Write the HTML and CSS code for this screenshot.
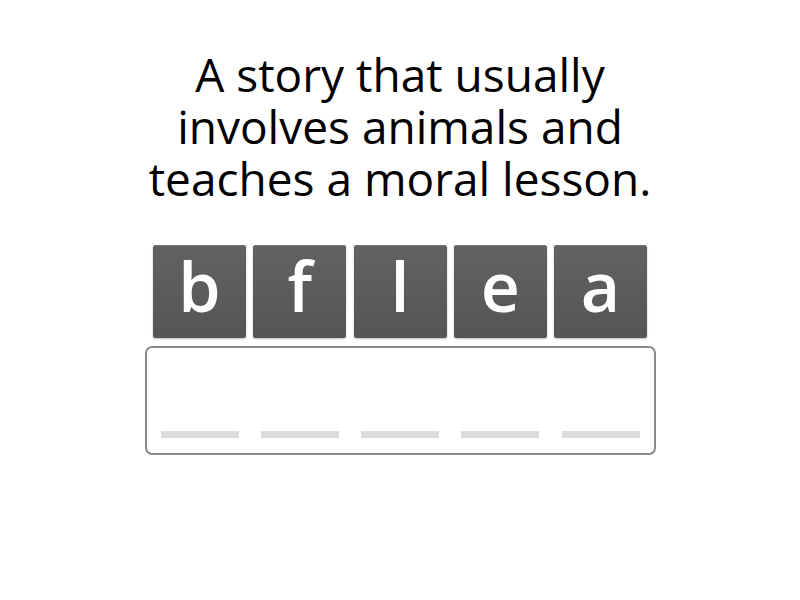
FILE: index.html
```html
<!DOCTYPE html>
<html lang="en">
<head>
<meta charset="utf-8">
<title>Anagram</title>
<link rel="stylesheet" href="styles.css">
</head>
<body>
<main class="game">
  <h1 class="clue">A story that usually<br>involves animals and<br>teaches a moral lesson.</h1>
  <div class="tiles">
    <div class="tile">b</div>
    <div class="tile">f</div>
    <div class="tile">l</div>
    <div class="tile">e</div>
    <div class="tile">a</div>
  </div>
  <div class="answer">
    <span class="slot"></span>
    <span class="slot"></span>
    <span class="slot"></span>
    <span class="slot"></span>
    <span class="slot"></span>
  </div>
</main>
</body>
</html>
```

FILE: styles.css
```css
html, body {
  margin: 0;
  padding: 0;
  background: #ffffff;
}

.game {
  width: 800px;
  height: 600px;
  display: flex;
  flex-direction: column;
  align-items: center;
  font-family: "Open Sans", "Noto Sans", sans-serif;
}

.clue {
  margin: 48px 0 0;
  font-size: 46px;
  font-weight: 400;
  line-height: 52px;
  text-align: center;
  color: #000000;
}

.tiles {
  margin-top: 41px;
  display: flex;
  gap: 7.3px;
}

.tile {
  width: 93px;
  height: 93px;
  box-sizing: border-box;
  display: flex;
  align-items: center;
  justify-content: center;
  border-radius: 2px;
  background: linear-gradient(#626262, #555555);
  border-top: 1px solid #777777;
  box-shadow: 0 1px 2px rgba(0, 0, 0, 0.25);
  color: #ffffff;
  font-size: 68px;
  font-weight: 600;
  line-height: 1;
  padding-bottom: 12px;
}

.answer {
  margin-top: 8px;
  width: 511px;
  height: 109px;
  box-sizing: border-box;
  border: 2px solid #8a8a8a;
  border-radius: 7px;
  display: flex;
  align-items: flex-end;
  justify-content: space-between;
  padding: 0 14px 15px;
}

.slot {
  width: 78px;
  height: 7px;
  background: #dcdcdc;
}
```
